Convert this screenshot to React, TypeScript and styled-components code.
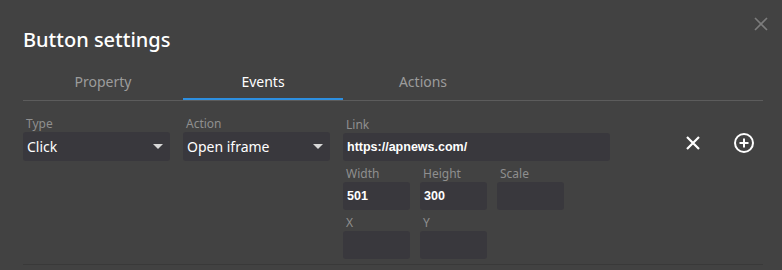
import React from "react";
import styled, { createGlobalStyle } from "styled-components";

const Global = createGlobalStyle`
  html, body { margin: 0; padding: 0; background: #424242; }
  body { font-family: "Noto Sans", "Open Sans", sans-serif; }
`;

const Dialog = styled.div`
  position: relative;
  width: 782px;
  height: 270px;
  box-sizing: border-box;
  padding: 0 19px 0 23px;
  background: #424242;
  overflow: hidden;
`;

const CloseButton = styled.button`
  position: absolute;
  top: 17px;
  right: 14px;
  width: 14px;
  height: 14px;
  padding: 0;
  border: none;
  background: none;
  display: flex;
`;

const Title = styled.h1`
  margin: 0;
  padding-top: 26px;
  height: 54px;
  box-sizing: border-box;
  font-size: 20px;
  font-weight: 500;
  color: #ffffff;
  line-height: 27px;
`;

const Tabs = styled.div`
  display: flex;
  border-bottom: 1px solid #5c5c5c;
  height: 47px;
  box-sizing: border-box;
`;

const Tab = styled.div<{ $active?: boolean }>`
  width: 160px;
  display: flex;
  align-items: flex-end;
  justify-content: center;
  padding-bottom: 6px;
  box-sizing: border-box;
  font-size: 14px;
  line-height: 20px;
  color: ${(p) => (p.$active ? "#ffffff" : "#9c9c9c")};
  border-bottom: 2px solid ${(p) => (p.$active ? "#2d8fe0" : "transparent")};
`;

const Row = styled.div`
  display: flex;
  align-items: flex-start;
  padding-top: 15px;
  height: 164px;
  box-sizing: border-box;
  border-bottom: 1px solid #393939;
`;

const Field = styled.div<{ $w: number; $gap?: number }>`
  display: flex;
  flex-direction: column;
  width: ${(p) => p.$w}px;
  margin-left: ${(p) => p.$gap ?? 0}px;
`;

const Label = styled.div`
  font-size: 12px;
  line-height: 16px;
  color: #8f8f8f;
  padding-left: 3px;
`;

const Select = styled.div`
  height: 29px;
  border-radius: 3px;
  background: #39383d;
  display: flex;
  align-items: center;
  justify-content: space-between;
  padding: 0 7px 0 4px;
  font-size: 14px;
  color: #ffffff;
`;

const Caret = styled.span`
  width: 0;
  height: 0;
  border-left: 5px solid transparent;
  border-right: 5px solid transparent;
  border-top: 5px solid #d8d8d8;
`;

const LinkGroup = styled.div`
  display: flex;
  flex-direction: column;
  gap: 5px;
  width: 267px;
  margin-left: 13px;
  margin-top: 1px;
`;

const Grid = styled.div`
  display: flex;
  gap: 10px;
`;

const Input = styled.div`
  height: 28px;
  box-sizing: border-box;
  border-radius: 3px;
  background: #39383d;
  display: flex;
  align-items: center;
  padding-left: 4px;
  font-family: "Liberation Sans", Arial, sans-serif;
  font-weight: 700;
  font-size: 12.5px;
  color: #ffffff;
`;

const Actions = styled.div`
  display: flex;
  align-items: center;
  gap: 32px;
  margin-left: 75px;
  margin-top: 16px;
`;

const IconButton = styled.button`
  border: none;
  background: none;
  padding: 0;
  display: flex;
`;

const Small = ({ label, value, w = 67 }: { label: string; value?: string; w?: number }) => (
  <Field $w={w}>
    <Label>{label}</Label>
    <Input>{value}</Input>
  </Field>
);

export default function App() {
  return (
    <>
      <Global />
      <Dialog>
        <CloseButton aria-label="close">
          <svg width="14" height="14" viewBox="0 0 14 14">
            <path d="M1 1L13 13M13 1L1 13" stroke="#7c7c7c" strokeWidth="1.6" />
          </svg>
        </CloseButton>
        <Title>Button settings</Title>
        <Tabs>
          <Tab>Property</Tab>
          <Tab $active>Events</Tab>
          <Tab>Actions</Tab>
        </Tabs>
        <Row>
          <Field $w={147}>
            <Label>Type</Label>
            <Select>
              Click
              <Caret />
            </Select>
          </Field>
          <Field $w={147} $gap={13}>
            <Label>Action</Label>
            <Select>
              Open iframe
              <Caret />
            </Select>
          </Field>
          <LinkGroup>
            <Field $w={267}>
              <Label>Link</Label>
              <Input>https://apnews.com/</Input>
            </Field>
            <Grid>
              <Small label="Width" value="501" />
              <Small label="Height" value="300" />
              <Small label="Scale" />
            </Grid>
            <Grid>
              <Small label="X" />
              <Small label="Y" />
            </Grid>
          </LinkGroup>
          <Actions>
            <IconButton aria-label="remove">
              <svg width="16" height="16" viewBox="0 0 16 16">
                <path d="M2 2L14 14M14 2L2 14" stroke="#ffffff" strokeWidth="2.2" />
              </svg>
            </IconButton>
            <IconButton aria-label="add">
              <svg width="22" height="22" viewBox="0 0 22 22">
                <circle cx="11" cy="11" r="9" fill="none" stroke="#ffffff" strokeWidth="2" />
                <path d="M11 6.5V15.5M6.5 11H15.5" stroke="#ffffff" strokeWidth="2" />
              </svg>
            </IconButton>
          </Actions>
        </Row>
      </Dialog>
    </>
  );
}
